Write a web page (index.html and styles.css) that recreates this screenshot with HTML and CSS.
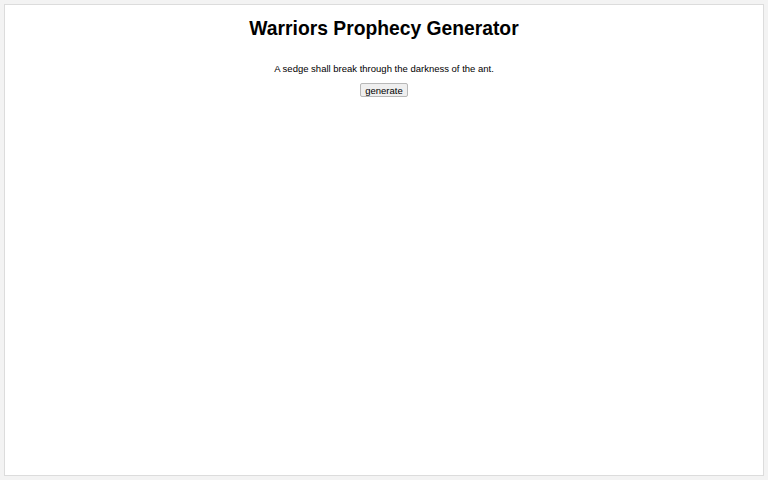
FILE: index.html
```html
<!DOCTYPE html>
<html>
<head>
<meta charset="utf-8">
<link rel="stylesheet" href="styles.css">
</head>
<body>
<div class="page">
  <h1 class="title">Warriors Prophecy Generator</h1>
  <p class="prophecy">A sedge shall break through the darkness of the ant.</p>
  <button class="gen">generate</button>
</div>
</body>
</html>
```
FILE: styles.css
```css
html, body { margin: 0; padding: 0; }
body {
  background: #f3f3f3;
  padding: 4px;
  font-family: "Liberation Sans", Arial, sans-serif;
}
.page {
  background: #fff;
  border: 1px solid #dcdcdc;
  height: 472px;
  box-sizing: border-box;
  display: flex;
  flex-direction: column;
  align-items: center;
}
.title {
  font-size: 19.3px;
  font-weight: bold;
  margin: 12px 0 0 0;
  line-height: 23px;
  color: #000;
}
.prophecy {
  font-size: 9.5px;
  margin: 23px 0 0 0;
  line-height: 12px;
  color: #000;
}
.gen {
  margin-top: 8px;
  font-family: "Liberation Sans", Arial, sans-serif;
  font-size: 9.5px;
  line-height: 11px;
  padding: 1px 4px;
  width: 48px;
  height: 14px;
  background: #efefef;
  border: 1px solid #b8b8b8;
  border-radius: 2px;
  color: #000;
}
```
